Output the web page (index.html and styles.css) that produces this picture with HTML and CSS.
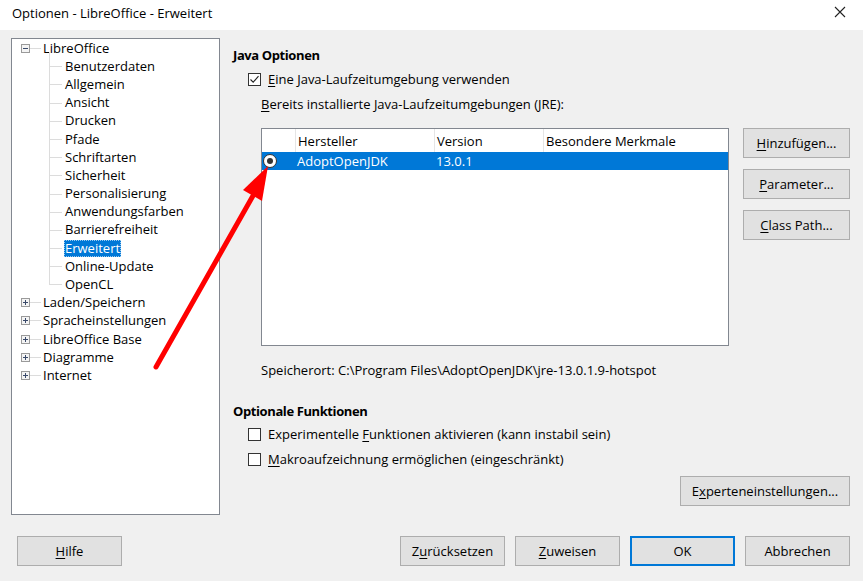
FILE: index.html
```html
<!DOCTYPE html>
<html lang="de">

<head>
    <meta charset="UTF-8">
    <title>Optionen - LibreOffice - Erweitert</title>
    <link rel="stylesheet" href="styles.css">
</head>

<body>
    <div class="window">
        <div class="titlebar">
            <span class="title">Optionen - LibreOffice - Erweitert</span>
            <svg class="close" width="12" height="12" viewBox="0 0 12 12">
                <path d="M1 1 L11 11 M11 1 L1 11" stroke="#222" stroke-width="1.1" fill="none"/>
            </svg>
        </div>

        <div class="content">
            <div class="main">
                <!-- navigation tree -->
                <div class="tree">
                    <div class="node open">
                        <div class="row top">
                            <span class="expander">
                                <svg width="9" height="9" viewBox="0 0 9 9"><rect x="0.5" y="0.5" width="8" height="8" fill="#f4f4f4" stroke="#9a9a9a"/><path d="M2 4.5 H7" stroke="#3a4a6a"/></svg>
                            </span>
                            <span class="label">LibreOffice</span>
                        </div>
                        <ul class="children">
                            <li><span class="label">Benutzerdaten</span></li>
                            <li><span class="label">Allgemein</span></li>
                            <li><span class="label">Ansicht</span></li>
                            <li><span class="label">Drucken</span></li>
                            <li><span class="label">Pfade</span></li>
                            <li><span class="label">Schriftarten</span></li>
                            <li><span class="label">Sicherheit</span></li>
                            <li><span class="label">Personalisierung</span></li>
                            <li><span class="label">Anwendungsfarben</span></li>
                            <li><span class="label">Barrierefreiheit</span></li>
                            <li><span class="label selected">Erweitert</span></li>
                            <li><span class="label">Online-Update</span></li>
                            <li class="last"><span class="label">OpenCL</span></li>
                        </ul>
                    </div>
                    <div class="row top"><span class="expander plus"><svg width="9" height="9" viewBox="0 0 9 9"><rect x="0.5" y="0.5" width="8" height="8" fill="#f4f4f4" stroke="#9a9a9a"/><path d="M2 4.5 H7 M4.5 2 V7" stroke="#3a4a6a"/></svg></span><span class="label">Laden/Speichern</span></div>
                    <div class="row top"><span class="expander plus"><svg width="9" height="9" viewBox="0 0 9 9"><rect x="0.5" y="0.5" width="8" height="8" fill="#f4f4f4" stroke="#9a9a9a"/><path d="M2 4.5 H7 M4.5 2 V7" stroke="#3a4a6a"/></svg></span><span class="label">Spracheinstellungen</span></div>
                    <div class="row top"><span class="expander plus"><svg width="9" height="9" viewBox="0 0 9 9"><rect x="0.5" y="0.5" width="8" height="8" fill="#f4f4f4" stroke="#9a9a9a"/><path d="M2 4.5 H7 M4.5 2 V7" stroke="#3a4a6a"/></svg></span><span class="label">LibreOffice Base</span></div>
                    <div class="row top"><span class="expander plus"><svg width="9" height="9" viewBox="0 0 9 9"><rect x="0.5" y="0.5" width="8" height="8" fill="#f4f4f4" stroke="#9a9a9a"/><path d="M2 4.5 H7 M4.5 2 V7" stroke="#3a4a6a"/></svg></span><span class="label">Diagramme</span></div>
                    <div class="row top"><span class="expander plus"><svg width="9" height="9" viewBox="0 0 9 9"><rect x="0.5" y="0.5" width="8" height="8" fill="#f4f4f4" stroke="#9a9a9a"/><path d="M2 4.5 H7 M4.5 2 V7" stroke="#3a4a6a"/></svg></span><span class="label">Internet</span></div>
                </div>

                <!-- options page -->
                <div class="page">
                    <div class="section-title">Java Optionen</div>
                    <label class="check-row first">
                        <span class="checkbox checked">
                            <svg width="11" height="11" viewBox="0 0 11 11"><path d="M1.5 5.5 L4.2 8.2 L9.5 2.2" stroke="#222" stroke-width="1.1" fill="none"/></svg>
                        </span>
                        <span><u>E</u>ine Java-Laufzeitumgebung verwenden</span>
                    </label>
                    <div class="sub-label"><u>B</u>ereits installierte Java-Laufzeitumgebungen (JRE):</div>

                    <div class="jre-area">
                        <div class="jre-table">
                            <div class="jre-head">
                                <div class="cell c-radio"></div>
                                <div class="cell c-vendor">Hersteller</div>
                                <div class="cell c-version">Version</div>
                                <div class="cell c-extra">Besondere Merkmale</div>
                            </div>
                            <div class="jre-row selected">
                                <div class="cell c-radio"><span class="radio"></span></div>
                                <div class="cell c-vendor">AdoptOpenJDK</div>
                                <div class="cell c-version">13.0.1</div>
                                <div class="cell c-extra"></div>
                            </div>
                        </div>
                        <div class="side-buttons">
                            <button class="btn"><u>H</u>inzufügen...</button>
                            <button class="btn"><u>P</u>arameter...</button>
                            <button class="btn"><u>C</u>lass Path...</button>
                        </div>
                    </div>

                    <div class="location">Speicherort: C:\Program Files\AdoptOpenJDK\jre-13.0.1.9-hotspot</div>

                    <div class="section-title optional">Optionale Funktionen</div>
                    <label class="check-row opt1">
                        <span class="checkbox"></span>
                        <span>Experimentelle <u>F</u>unktionen aktivieren (kann instabil sein)</span>
                    </label>
                    <label class="check-row opt2">
                        <span class="checkbox"></span>
                        <span><u>M</u>akroaufzeichnung ermöglichen (eingeschränkt)</span>
                    </label>

                    <div class="expert-row">
                        <button class="btn btn-wide">E<u>x</u>perteneinstellungen...</button>
                    </div>
                </div>
            </div>

            <div class="footer">
                <button class="btn"><u>H</u>ilfe</button>
                <div class="footer-right">
                    <button class="btn">Z<u>u</u>rücksetzen</button>
                    <button class="btn"><u>Z</u>uweisen</button>
                    <button class="btn btn-default">OK</button>
                    <button class="btn">Abbrechen</button>
                </div>
            </div>
        </div>

        <!-- red annotation arrow drawn over the dialog -->
        <svg class="annotation" width="863" height="581" viewBox="0 0 863 581">
            <line x1="156" y1="367" x2="254" y2="194" stroke="#ff0000" stroke-width="5" stroke-linecap="round"/>
            <polygon points="268,166 243,190 262,201" fill="#ff0000"/>
        </svg>
    </div>
</body>
</html>
```

FILE: styles.css
```css
:root {
    --face: #f0f0f0;
    --btn-face: #e1e1e1;
    --btn-border: #adadad;
    --accent: #0078d7;
    --text: #000;
    --tree-line: #dcdcdc;
}

* {
    box-sizing: border-box;
}

body {
    margin: 0;
    font-family: 'Open Sans', 'Noto Sans', sans-serif;
    font-size: 13px;
    color: var(--text);
    background: var(--face);
}

u {
    text-decoration: underline;
    text-underline-offset: 2px;
}

.window {
    position: relative;
    width: 863px;
    height: 581px;
    overflow: hidden;
    background: var(--face);
}

.titlebar {
    height: 30px;
    background: #fff;
    display: flex;
    align-items: flex-start;
    justify-content: space-between;
    padding: 5px 17px 0 12px;
}

.title {
    line-height: 16px;
}

.close {
    margin-top: 1px;
}

.content {
    padding: 8px 13px 0 11px;
}

.main {
    display: flex;
    gap: 13px;
    height: 477px;
}

/* tree */

.tree {
    width: 209px;
    flex: none;
    background: #fff;
    border: 1px solid #828790;
    line-height: 18.2px;
}

.row {
    height: 18.2px;
    display: flex;
    align-items: center;
    white-space: nowrap;
}

.row.top {
    padding-left: 9px;
}

.expander {
    width: 9px;
    height: 9px;
    display: flex;
    position: relative;
}

.expander svg {
    display: block;
}

.expander::after {
    content: "";
    position: absolute;
    left: 9px;
    top: 4px;
    width: 11px;
    border-top: 1px solid var(--tree-line);
}

.row.top .label {
    margin-left: 12px;
}

.children {
    list-style: none;
    margin: 0 0 0 37px;
    padding: 0;
    position: relative;
}

.children::before {
    content: "";
    position: absolute;
    left: 0;
    top: -5px;
    bottom: 9px;
    border-left: 1px solid var(--tree-line);
}

.children li {
    height: 18.2px;
    display: flex;
    align-items: center;
    padding-left: 15px;
    position: relative;
    white-space: nowrap;
}

.children li::before {
    content: "";
    position: absolute;
    left: 1px;
    top: 9px;
    width: 12px;
    border-top: 1px solid var(--tree-line);
}

.label {
    line-height: 17px;
    padding: 0 1px;
}

.label.selected {
    background: var(--accent);
    color: #fff;
    outline: 1px dotted #99c9ef;
    outline-offset: -1px;
}

/* right page */

.page {
    flex: 1;
    display: flex;
    flex-direction: column;
    align-items: flex-start;
    line-height: 16px;
}

.section-title {
    font-weight: bold;
    letter-spacing: -0.4px;
    margin-top: 9px;
}

.section-title.optional {
    margin-top: 25px;
}

.check-row {
    display: flex;
    align-items: center;
    gap: 7px;
    padding-left: 15px;
}

.check-row.first {
    margin-top: 8px;
}

.check-row.opt1 {
    margin-top: 7px;
}

.check-row.opt2 {
    margin-top: 9px;
}

.checkbox {
    width: 13px;
    height: 13px;
    flex: none;
    border: 1px solid #333;
    background: #fff;
    display: flex;
    align-items: center;
    justify-content: center;
}

.sub-label {
    margin-top: 9px;
    padding-left: 28px;
}

.jre-area {
    margin-top: 16px;
    padding-left: 28px;
    display: flex;
    gap: 14px;
    align-self: stretch;
}

.jre-table {
    width: 468px;
    height: 218px;
    background: #fff;
    border: 1px solid #828790;
}

.jre-head,
.jre-row {
    display: flex;
}

.jre-head {
    height: 23px;
}

.jre-head .cell {
    border-right: 1px solid #e5e5e5;
    display: flex;
    align-items: center;
    padding-left: 2px;
}

.jre-head .cell:last-child {
    border-right: none;
}

.jre-row {
    height: 18px;
}

.jre-row .cell {
    display: flex;
    align-items: center;
    padding-left: 1px;
}

.jre-row.selected {
    background: var(--accent);
    color: #fff;
}

.c-radio {
    width: 34px;
}

.c-vendor {
    width: 139px;
}

.c-version {
    width: 109px;
}

.c-extra {
    flex: 1;
}

.jre-row .c-radio {
    padding-left: 1px;
}

.radio {
    width: 14px;
    height: 14px;
    border-radius: 50%;
    background: #fff;
    border: 1px solid #333;
    display: flex;
    align-items: center;
    justify-content: center;
}

.radio::after {
    content: "";
    width: 6px;
    height: 6px;
    border-radius: 50%;
    background: #333;
}

.side-buttons {
    display: flex;
    flex-direction: column;
    gap: 11px;
}

.location {
    margin-top: 16px;
    padding-left: 28px;
}

.expert-row {
    margin-top: 9px;
    align-self: stretch;
    display: flex;
    justify-content: flex-end;
}

/* buttons */

.btn {
    width: 107px;
    height: 30px;
    font-family: inherit;
    font-size: 13px;
    color: var(--text);
    background: var(--btn-face);
    border: 1px solid var(--btn-border);
    border-radius: 0;
    padding: 0;
}

.btn-wide {
    width: 170px;
}

.btn-default {
    border: 2px solid var(--accent);
}

.footer {
    margin-top: 21px;
    display: flex;
    justify-content: space-between;
    padding-left: 6px;
}

.footer .btn {
    width: 105px;
}

.footer-right {
    display: flex;
    gap: 10px;
}

.annotation {
    position: absolute;
    top: 0;
    left: 0;
    pointer-events: none;
}
```
